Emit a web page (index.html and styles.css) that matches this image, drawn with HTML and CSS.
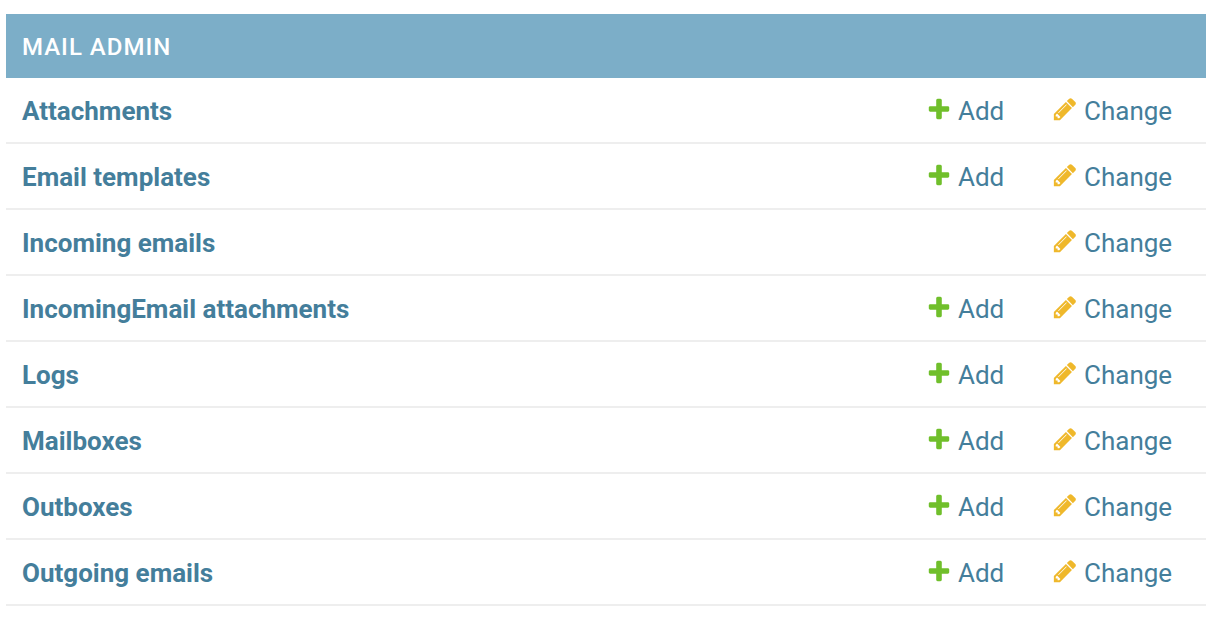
FILE: index.html
```
<!DOCTYPE html>
<html lang="en">
  <head>
    <meta charset="UTF-8" />
    <meta name="viewport" content="width=device-width, initial-scale=1.0" />
    <title>Mail Admin</title>
    <link rel="stylesheet" href="styles.css">
  </head>
  <body>
    <svg class="sprite" aria-hidden="true">
      <symbol id="plus" viewBox="0 0 1792 1792">
        <path d="M1600 796v192q0 40-28 68t-68 28h-416v416q0 40-28 68t-68 28h-192q-40 0-68-28t-28-68v-416h-416q-40 0-68-28t-28-68v-192q0-40 28-68t68-28h416v-416q0-40 28-68t68-28h192q40 0 68 28t28 68v416h416q40 0 68 28t28 68z" />
      </symbol>
      <symbol id="pencil" viewBox="0 0 1792 1792">
        <path d="M491 1536l91-91-235-235-91 91v107h128v128h107zm523-928q0-22-22-22-10 0-17 7l-542 542q-7 7-7 17 0 22 22 22 10 0 17-7l542-542q7-7 7-17zm-54-192l416 416-832 832h-416v-416zm683 96q0 53-37 90l-166 166-416-416 166-165q36-38 90-38 53 0 91 38l235 234q37 39 37 91z" />
      </symbol>
    </svg>
    <div class="module">
      <table>
        <caption><a href="#" class="section">Mail Admin</a></caption>
        <tbody>
          <tr>
            <th scope="row"><a href="#">Attachments</a></th>
            <td class="add"><a href="#"><svg class="icon"><use href="#plus" /></svg>Add</a></td>
            <td class="change"><a href="#"><svg class="icon"><use href="#pencil" /></svg>Change</a></td>
          </tr>
          <tr>
            <th scope="row"><a href="#">Email templates</a></th>
            <td class="add"><a href="#"><svg class="icon"><use href="#plus" /></svg>Add</a></td>
            <td class="change"><a href="#"><svg class="icon"><use href="#pencil" /></svg>Change</a></td>
          </tr>
          <tr>
            <th scope="row"><a href="#">Incoming emails</a></th>
            <td class="add"></td>
            <td class="change"><a href="#"><svg class="icon"><use href="#pencil" /></svg>Change</a></td>
          </tr>
          <tr>
            <th scope="row"><a href="#">IncomingEmail attachments</a></th>
            <td class="add"><a href="#"><svg class="icon"><use href="#plus" /></svg>Add</a></td>
            <td class="change"><a href="#"><svg class="icon"><use href="#pencil" /></svg>Change</a></td>
          </tr>
          <tr>
            <th scope="row"><a href="#">Logs</a></th>
            <td class="add"><a href="#"><svg class="icon"><use href="#plus" /></svg>Add</a></td>
            <td class="change"><a href="#"><svg class="icon"><use href="#pencil" /></svg>Change</a></td>
          </tr>
          <tr>
            <th scope="row"><a href="#">Mailboxes</a></th>
            <td class="add"><a href="#"><svg class="icon"><use href="#plus" /></svg>Add</a></td>
            <td class="change"><a href="#"><svg class="icon"><use href="#pencil" /></svg>Change</a></td>
          </tr>
          <tr>
            <th scope="row"><a href="#">Outboxes</a></th>
            <td class="add"><a href="#"><svg class="icon"><use href="#plus" /></svg>Add</a></td>
            <td class="change"><a href="#"><svg class="icon"><use href="#pencil" /></svg>Change</a></td>
          </tr>
          <tr>
            <th scope="row"><a href="#">Outgoing emails</a></th>
            <td class="add"><a href="#"><svg class="icon"><use href="#plus" /></svg>Add</a></td>
            <td class="change"><a href="#"><svg class="icon"><use href="#pencil" /></svg>Change</a></td>
          </tr>
        </tbody>
      </table>
    </div>
  </body>
</html>
```

FILE: styles.css
```
body {
  margin: 0;
  background: #fff;
  font-family: Roboto, "Liberation Sans", sans-serif;
  font-size: 26px;
  line-height: 32px;
}
a {
  color: #447e9b;
  text-decoration: none;
}
a:hover {
  color: #036;
}
.sprite {
  display: none;
}
.module {
  padding: 14px 16px 12px 6px;
}
table {
  width: 100%;
  border-collapse: separate;
  border-spacing: 0;
}
caption {
  padding: 17px 16px 15px;
  text-align: left;
  font-size: 24px;
  font-weight: 500;
  letter-spacing: 1px;
  text-transform: uppercase;
  background: #7caec8;
}
.section,
.section:hover {
  color: #fff;
}
th,
td {
  padding: 17px 16px 15px;
  text-align: left;
  vertical-align: top;
  border-bottom: 2px solid #eee;
}
th {
  font-weight: bold;
}
.add,
.change {
  box-sizing: border-box;
  white-space: nowrap;
}
.add {
  width: 126px;
}
.change {
  width: 170px;
}
td a {
  display: flex;
  align-items: flex-start;
  gap: 6px;
}
.icon {
  width: 26px;
  height: 26px;
  margin-top: 1px;
}
.add .icon {
  fill: #70bf2b;
}
.change .icon {
  fill: #efb82b;
}
```
